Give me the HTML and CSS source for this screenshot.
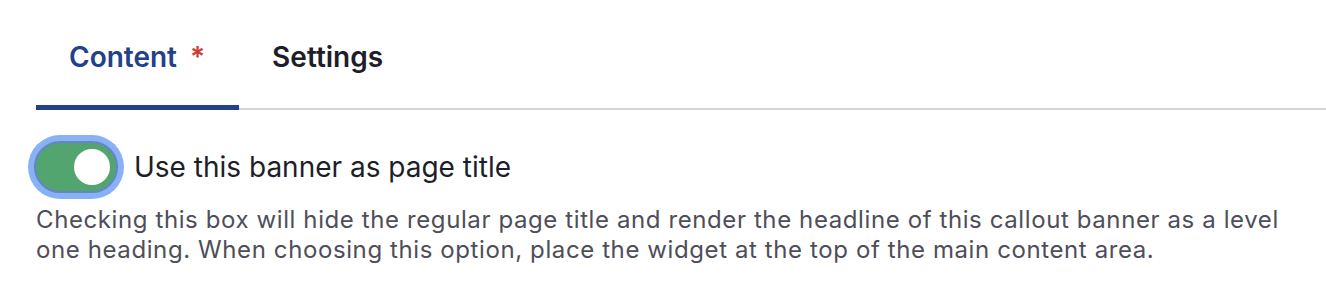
FILE: index.html
```html
<!DOCTYPE html>
<html>
<head>
    <title>Callout banner</title>
    <link rel="stylesheet" href="styles.css">
</head>
<body>
    <div class="editor">
        <div class="tabList">
            <div class="tab active">Content<span class="required">*</span></div>
            <div class="tab">Settings</div>
        </div>

        <div class="field">
            <label class="toggleRow">
                <span class="toggle"><span class="knob"></span></span>
                <span class="toggleLabel">Use this banner as page title</span>
            </label>
            <p class="help">
                Checking this box will hide the regular page title and render the headline of this callout banner as a level one heading. When choosing this option, place the widget at the top of the main content area.
            </p>
        </div>
    </div>
</body>
</html>
```

FILE: styles.css
```css
body {
    margin: 0;
    background-color: #ffffff;
    font-family: Inter, "Noto Sans", sans-serif;
}

.editor {
    padding-left: 36px;
    padding-top: 10px;
}

.tabList {
    display: flex;
    border-bottom: 2px solid #d4d4d9;
}

.tab {
    font-size: 28px;
    line-height: 34px;
    font-weight: 600;
    color: #1e1e2a;
    padding: 30px 33px 31px 33px;
    border-bottom: 5px solid transparent;
    margin-bottom: -2px;
}

.tab.active {
    color: #243f8c;
    border-bottom-color: #243f8c;
    padding-right: 34px;
}

.required {
    color: #c7403a;
    margin-left: 13px;
}

.field {
    padding-top: 31px;
}

.toggleRow {
    display: flex;
    align-items: center;
    gap: 16px;
}

.toggle {
    box-sizing: border-box;
    display: flex;
    justify-content: flex-end;
    align-items: center;
    width: 84px;
    height: 52px;
    padding: 0 6px;
    margin-left: -2px;
    border: 2px solid #6584c8;
    border-radius: 26px;
    background-color: #53a56f;
    box-shadow: 0 0 0 6px #88b1f6;
}

.knob {
    width: 36px;
    height: 36px;
    border-radius: 50%;
    background-color: #ffffff;
}

.toggleLabel {
    font-size: 28px;
    line-height: 34px;
    color: #1e1e2a;
}

.help {
    margin: 12px 0 0 0;
    padding-right: 30px;
    font-size: 24px;
    line-height: 30px;
    letter-spacing: 0.6px;
    color: #4e4e5a;
}
```
